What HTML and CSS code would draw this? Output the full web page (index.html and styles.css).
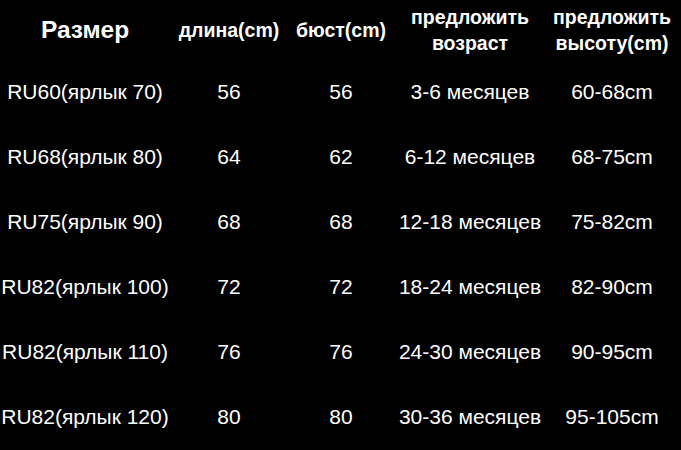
FILE: index.html
```html
<!DOCTYPE html>
<html lang="ru">
<head>
<meta charset="utf-8">
<link rel="stylesheet" href="styles.css">
</head>
<body>
<div class="table">
  <div class="cell head big">Размер</div>
  <div class="cell head">длина(cm)</div>
  <div class="cell head">бюст(cm)</div>
  <div class="cell head">предложить<br>возраст</div>
  <div class="cell head">предложить<br>высоту(cm)</div>

  <div class="cell">RU60(ярлык 70)</div>
  <div class="cell">56</div>
  <div class="cell">56</div>
  <div class="cell">3-6 месяцев</div>
  <div class="cell">60-68cm</div>

  <div class="cell">RU68(ярлык 80)</div>
  <div class="cell">64</div>
  <div class="cell">62</div>
  <div class="cell">6-12 месяцев</div>
  <div class="cell">68-75cm</div>

  <div class="cell">RU75(ярлык 90)</div>
  <div class="cell">68</div>
  <div class="cell">68</div>
  <div class="cell">12-18 месяцев</div>
  <div class="cell">75-82cm</div>

  <div class="cell">RU82(ярлык 100)</div>
  <div class="cell">72</div>
  <div class="cell">72</div>
  <div class="cell">18-24 месяцев</div>
  <div class="cell">82-90cm</div>

  <div class="cell">RU82(ярлык 110)</div>
  <div class="cell">76</div>
  <div class="cell">76</div>
  <div class="cell">24-30 месяцев</div>
  <div class="cell">90-95cm</div>

  <div class="cell">RU82(ярлык 120)</div>
  <div class="cell">80</div>
  <div class="cell">80</div>
  <div class="cell">30-36 месяцев</div>
  <div class="cell">95-105cm</div>
</div>
</body>
</html>
```
FILE: styles.css
```css
html, body {
  margin: 0;
  padding: 0;
  background: #000;
}
body {
  width: 681px;
  height: 450px;
  overflow: hidden;
  font-family: "Liberation Sans", Arial, sans-serif;
  color: #fff;
}
.table {
  display: grid;
  grid-template-columns: 170px 118px 106px 152px 132px;
  grid-template-rows: 60px repeat(6, 65px);
}
.cell {
  display: flex;
  align-items: center;
  justify-content: center;
  text-align: center;
  font-size: 21px;
  white-space: nowrap;
  padding-bottom: 1px;
}
.head {
  font-weight: bold;
  font-size: 19.5px;
  line-height: 26px;
}
.head.big {
  font-size: 24.5px;
}
```
